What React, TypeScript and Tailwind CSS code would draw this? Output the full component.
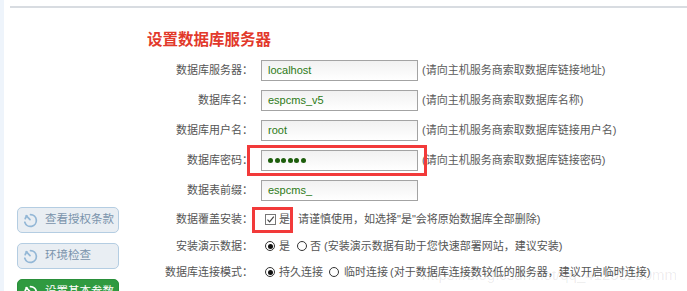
import React from 'react';

const font = 'font-["Liberation_Sans","Noto_Sans_CJK_SC",sans-serif]';

const ResetIcon = ({ color }: { color: string }) => (
  <svg width="15" height="15" viewBox="0 0 15 15" fill="none" stroke={color} strokeWidth="1.7" strokeLinecap="round">
    <path d="M7.5 1.6 A5.9 5.9 0 1 1 1.8 9.2" />
    <path d="M2.2 5.6 A5.9 5.9 0 0 1 4 3" />
    <path d="M3.2 2.6 L7 6.6" />
  </svg>
);

const SideButton = ({ label, active = false }: { label: string; active?: boolean }) => (
  <div
    className={`flex h-[26px] w-[102px] shrink-0 items-center gap-[7px] rounded-[5px] border pl-[5px] text-[11.5px] ${
      active
        ? 'border-[#2a8f3a] bg-[#2f9a40] text-white'
        : 'border-[#b4cde2] bg-[#e9eef3] text-[#7a93ab]'
    }`}
  >
    <ResetIcon color={active ? '#ffffff' : '#93b7d6'} />
    <span>{label}</span>
  </div>
);

const TextBox = ({ children }: { children: React.ReactNode }) => (
  <div className="flex h-[21px] w-[157px] shrink-0 items-center border border-[#a3a3a3] bg-gradient-to-b from-[#f1f1f1] to-white pl-[6px] text-[11px] text-[#2c7a16]">
    {children}
  </div>
);

const Radio = ({ checked }: { checked: boolean }) => (
  <span className="flex h-[10px] w-[10px] shrink-0 items-center justify-center rounded-full border border-[#333]">
    {checked && <span className="h-[5px] w-[5px] rounded-full bg-[#111]" />}
  </span>
);

const Row = ({ label, h = 'h-[30px]', children }: { label: string; h?: string; children: React.ReactNode }) => (
  <div className={`flex ${h} items-center`}>
    <div className="w-[106px] shrink-0 text-right text-[11px] text-[#555]">{label}</div>
    <div className="ml-[8px] flex items-center text-[11px] text-[#555]">{children}</div>
  </div>
);

const Hint = ({ children }: { children: React.ReactNode }) => (
  <span className="ml-[4px] whitespace-nowrap text-[11px] text-[#5a5a5a]">{children}</span>
);

export default function App() {
  return (
    <div className={`relative flex h-[291px] w-[687px] overflow-hidden bg-white ${font}`}>
      <div className="w-[4px] shrink-0 bg-[#eef4fb]" />
      <div className="ml-[6px] mt-[6px] flex flex-1 border-t-2 border-[#d8dce1]">
        <aside className="flex w-[137px] shrink-0 flex-col gap-[10px] pl-[7px] pt-[199px]">
          <SideButton label="查看授权条款" />
          <SideButton label="环境检查" />
          <SideButton label="设置基本参数" active />
        </aside>
        <main className="pt-[22px]">
          <h2 className="h-[20px] text-[15.5px] font-bold leading-[20px] text-[#e2392b]">设置数据库服务器</h2>
          <div className="mt-[5px]">
            <Row label="数据库服务器：">
              <TextBox>localhost</TextBox>
              <Hint>(请向主机服务商索取数据库链接地址)</Hint>
            </Row>
            <Row label="数据库名：">
              <TextBox>espcms_v5</TextBox>
              <Hint>(请向主机服务商索取数据库名称)</Hint>
            </Row>
            <Row label="数据库用户名：">
              <TextBox>root</TextBox>
              <Hint>(请向主机服务商索取数据库链接用户名)</Hint>
            </Row>
            <Row label="数据库密码：">
              <TextBox>
                <span className="flex gap-[1.5px]">
                  {[0, 1, 2, 3, 4, 5].map(i => (
                    <span key={i} className="h-[5px] w-[5px] rounded-full bg-[#1d5e0c]" />
                  ))}
                </span>
              </TextBox>
              <Hint>(请向主机服务商索取数据库链接密码)</Hint>
            </Row>
            <Row label="数据表前缀：">
              <TextBox>espcms_</TextBox>
            </Row>
            <Row label="数据覆盖安装：" h="h-[28px]">
              <span className="ml-[4px] flex h-[11px] w-[11px] items-center justify-center border border-[#777] bg-white">
                <svg width="9" height="9" viewBox="0 0 9 9" fill="none" stroke="#444" strokeWidth="1.2">
                  <path d="M1.5 4.6 L3.6 6.8 L7.8 1.6" />
                </svg>
              </span>
              <span className="ml-[3px]">是</span>
              <span className="ml-[8px] whitespace-nowrap">请谨慎使用，如选择"是"会将原始数据库全部删除)</span>
            </Row>
            <Row label="安装演示数据：" h="h-[26px]">
              <span className="ml-[4px]" />
              <Radio checked />
              <span className="ml-[4px]">是</span>
              <span className="ml-[7px]" />
              <Radio checked={false} />
              <span className="ml-[3px]">否</span>
              <span className="ml-[3px] whitespace-nowrap">(安装演示数据有助于您快速部署网站，建议安装)</span>
            </Row>
            <Row label="数据库连接模式：" h="h-[26px]">
              <span className="ml-[4px]" />
              <Radio checked />
              <span className="ml-[4px]">持久连接</span>
              <span className="ml-[6px]" />
              <Radio checked={false} />
              <span className="ml-[5px]">临时连接</span>
              <span className="ml-[2px] whitespace-nowrap">(对于数据库连接数较低的服务器，建议开启临时连接)</span>
            </Row>
          </div>
        </main>
      </div>

      {/* annotation boxes drawn over the form */}
      <div className="pointer-events-none absolute left-[247px] top-[145px] h-[31px] w-[180px] border-[3px] border-[#f23a3a]" />
      <div className="pointer-events-none absolute left-[252px] top-[207px] h-[26px] w-[41px] border-[3px] border-[#f23a3a]" />
      <span className="pointer-events-none absolute right-[10px] top-[264px] whitespace-nowrap font-['Liberation_Sans',sans-serif] text-[15px] text-[#000]/[0.08]">
        https://blog.csdn.net/qq_41250200mm
      </span>
    </div>
  );
}
